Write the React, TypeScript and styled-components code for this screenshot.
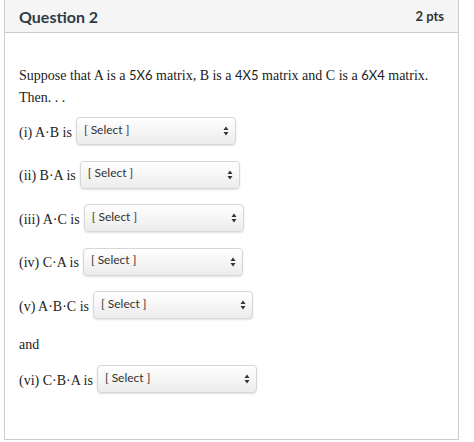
import styled, { createGlobalStyle } from 'styled-components';

const GlobalStyle = createGlobalStyle`
  body {
    margin: 0;
    background: #fff;
  }
`;

const Card = styled.section`
  box-sizing: border-box;
  margin-left: 4px;
  width: 455px;
  height: 440px;
  border: 1px solid #c7cdd1;
  border-top: none;
  background: #fff;
`;

const Header = styled.header`
  display: flex;
  align-items: center;
  justify-content: space-between;
  height: 32px;
  padding: 0 14px;
  background: #f5f5f5;
  border-bottom: 1px solid #c7cdd1;
  font-family: Lato, 'Open Sans', sans-serif;
  color: #2d3b45;
`;

const Title = styled.h2`
  margin: 0;
  font-size: 16px;
  font-weight: 700;
`;

const Points = styled.span`
  font-size: 13px;
  font-weight: 700;
  color: #333;
`;

const Body = styled.div`
  padding: 31px 14px 0;
  font-family: 'Liberation Serif', 'Times New Roman', serif;
  font-size: 14px;
  color: #222;
`;

const Intro = styled.p`
  margin: 0 0 8px;
  line-height: 22px;
`;

const Times = styled.span`
  font-family: Lato, sans-serif;
  font-size: 13px;
`;

const Row = styled.div`
  display: flex;
  align-items: center;
  gap: 4px;
  height: 28px;
  margin-bottom: 15.5px;
`;

const Label = styled.span`
  padding-top: 3px;
`;

const Plain = styled.p`
  margin: -0.5px 0 9px;
  line-height: 22px;
`;

const Select = styled.div`
  box-sizing: border-box;
  display: flex;
  align-items: center;
  justify-content: space-between;
  width: 160px;
  height: 28px;
  padding: 0 6px 4px 7px;
  border: 1px solid #d6d6d6;
  border-radius: 4px;
  background: linear-gradient(#ffffff, #ececec);
  box-shadow: 0 1px 2px rgba(0, 0, 0, 0.12);
  font-family: Lato, sans-serif;
  font-size: 12px;
  color: #333;
`;

const Arrows = styled.svg`
  width: 6px;
  height: 10px;
  margin-top: 4px;
`;

function Dropdown() {
  return (
    <Select>
      <span>[ Select ]</span>
      <Arrows viewBox='0 0 6 10'>
        <path d='M3 0.5 L5.5 4 H0.5 Z' fill='#333' />
        <path d='M3 9.5 L5.5 6 H0.5 Z' fill='#333' />
      </Arrows>
    </Select>
  );
}

const items = [
  '(i) A·B is',
  '(ii) B·A is',
  '(iii) A·C is',
  '(iv) C·A is',
  '(v) A·B·C is',
];

export default function App() {
  return (
    <>
      <GlobalStyle />
      <Card>
        <Header>
          <Title>Question 2</Title>
          <Points>2 pts</Points>
        </Header>
        <Body>
          <Intro>
            Suppose that A is a <Times>5X6</Times> matrix, B is a <Times>4X5</Times> matrix and C is a{' '}
            <Times>6X4</Times> matrix.
            <br />
            Then. . .
          </Intro>
          {items.map((label) => (
            <Row key={label}>
              <Label>{label}</Label>
              <Dropdown />
            </Row>
          ))}
          <Plain>and</Plain>
          <Row>
            <Label>(vi) C·B·A is</Label>
            <Dropdown />
          </Row>
        </Body>
      </Card>
    </>
  );
}
